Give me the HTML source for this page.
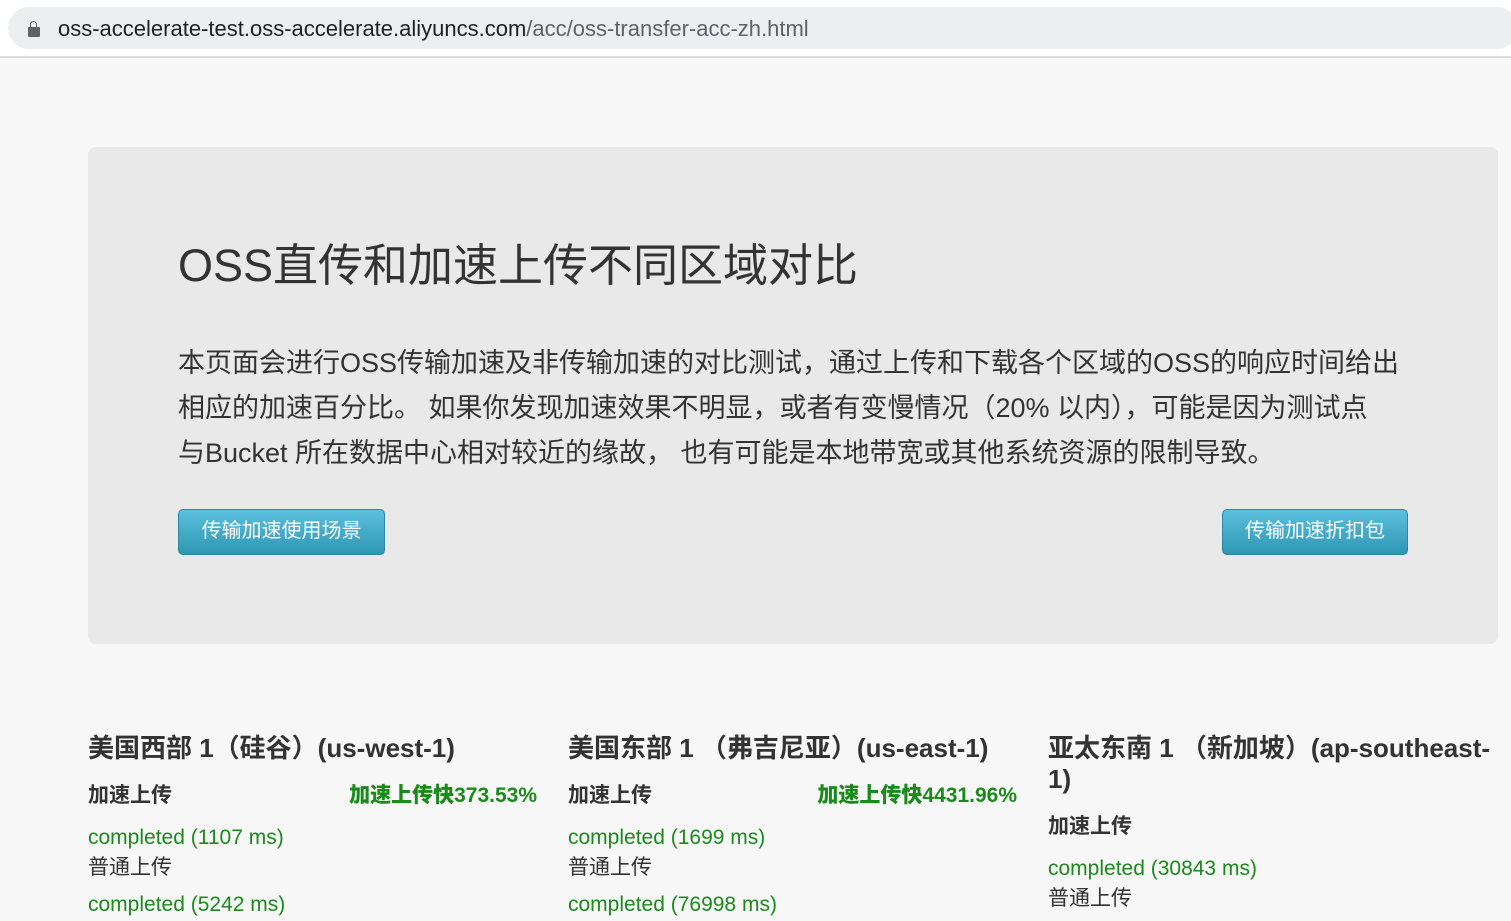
<!DOCTYPE html>
<html><head><meta charset="utf-8"><style>
body{margin:0;width:1511px;height:920px;overflow:hidden;background:#f7f7f7;font-family:"Liberation Sans","Noto Sans CJK SC",sans-serif;position:relative}
.bar{position:absolute;left:0;top:0;width:1511px;height:56px;background:#fff;border-bottom:2px solid #ddd}
.url{position:absolute;left:8px;top:7px;width:1510px;height:42px;background:#eceef0;border-radius:21px}
.url span{position:absolute;left:50px;top:9px;font-size:22px;color:#202124;white-space:nowrap}
.url span i{font-style:normal;color:#5f6368}
.lock{position:absolute;left:20px;top:20px;width:12px;height:10px;background:#5f6368;border-radius:1px}
.lock:before{content:"";position:absolute;left:2px;top:-6px;width:5px;height:6px;border:1.5px solid #5f6368;border-bottom:none;border-radius:4px 4px 0 0}
.jumbo{position:absolute;left:88px;top:147px;width:1410px;height:497px;background:#e9e9e9;border-radius:8px}
h1{position:absolute;left:90px;top:82px;margin:0;font-size:45px;font-weight:400;color:#333;white-space:nowrap}
.p{position:absolute;left:90px;top:194px;width:1320px;font-size:27px;line-height:45px;color:#333;white-space:nowrap}
.btn{position:absolute;top:362px;height:44px;border-radius:5px;background:linear-gradient(#5bc0de,#2f96b4);border:1px solid #2a8aa6;color:#fff;font-size:20px;line-height:43px;text-align:center}
.col{position:absolute;top:733px;width:460px;color:#333}
.h3{font-size:26px;font-weight:700;line-height:31px}
.row{position:relative;font-size:21px;font-weight:700;margin-top:15px;height:30px}
.row b{position:absolute;right:0;top:0;color:#1a8a1a}
.g{color:#1a8a1a;font-size:21px;line-height:32px}
.n{font-size:21px;line-height:28px}
</style></head><body>
<div class="bar"><div class="url"><div class="lock"></div><span>oss-accelerate-test.oss-accelerate.aliyuncs.com<i>/acc/oss-transfer-acc-zh.html</i></span></div></div>
<div class="jumbo">
<h1>OSS直传和加速上传不同区域对比</h1>
<div class="p">本页面会进行OSS传输加速及非传输加速的对比测试，通过上传和下载各个区域的OSS的响应时间给出<br>相应的加速百分比。 如果你发现加速效果不明显，或者有变慢情况（20% 以内），可能是因为测试点<br>与Bucket 所在数据中心相对较近的缘故， 也有可能是本地带宽或其他系统资源的限制导致。</div>
<div class="btn" style="left:90px;width:205px">传输加速使用场景</div>
<div class="btn" style="left:1134px;width:184px">传输加速折扣包</div>
</div>
<div class="col" style="left:88px;width:449px"><div class="h3">美国西部 1（硅谷）(us-west-1)</div><div class="row">加速上传<b>加速上传快373.53%</b></div><div class="g" style="margin-top:13px">completed (1107 ms)</div><div class="n">普通上传</div><div class="g" style="margin-top:7px">completed (5242 ms)</div></div>
<div class="col" style="left:568px;width:449px"><div class="h3">美国东部 1 （弗吉尼亚）(us-east-1)</div><div class="row">加速上传<b>加速上传快4431.96%</b></div><div class="g" style="margin-top:13px">completed (1699 ms)</div><div class="n">普通上传</div><div class="g" style="margin-top:7px">completed (76998 ms)</div></div>
<div class="col" style="left:1048px;width:450px"><div class="h3">亚太东南 1 （新加坡）(ap-southeast-<br>1)</div><div class="row">加速上传</div><div class="g" style="margin-top:13px">completed (30843 ms)</div><div class="n">普通上传</div></div>
</body></html>
